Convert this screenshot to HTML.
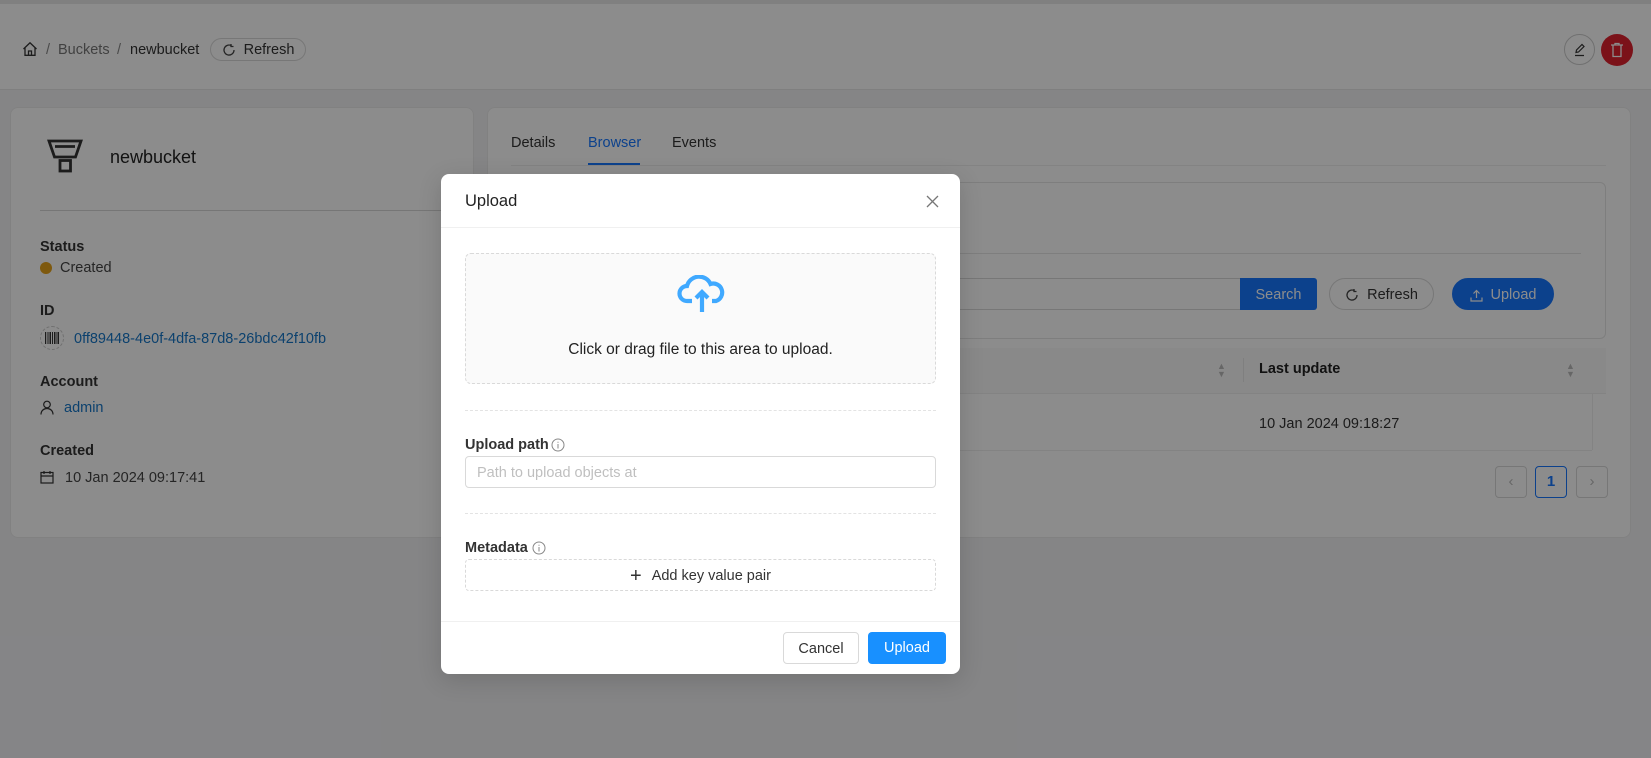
<!DOCTYPE html>
<html><head><meta charset="utf-8"><style>
*{box-sizing:border-box;margin:0;padding:0}
body{width:1651px;height:758px;overflow:hidden;background:#f2f3f5;font-family:"Liberation Sans",Arial,sans-serif;color:rgba(0,0,0,.88);position:relative;font-size:15px}
.abs{position:absolute}
.hdr{left:0;top:4px;width:1651px;height:86px;background:#fff;border-bottom:1px solid #e8e8e8}
.card{background:#fff;border-radius:8px;border:1px solid #ececec}
.lbl{font-weight:bold;font-size:14.5px;color:#333}
.val{font-size:14.5px;color:#444}
.link{color:#1677c8}
.btn{border:1px solid #d9d9d9;border-radius:16px;background:#fff;display:flex;align-items:center;justify-content:center;gap:8px;font-size:14.5px;color:#333}
.mask{left:0;top:0;width:1651px;height:758px;background:rgba(0,0,0,.45)}
.modal{left:441px;top:174px;width:519px;height:500px;background:#fff;border-radius:8px;box-shadow:0 6px 24px rgba(0,0,0,.15)}
.dash{border-top:1px dashed #e3e3e3}
</style></head><body>
<div class="abs" style="left:0;top:0;width:1651px;height:4px;background:#e9e9e9"></div>
<div class="abs hdr"></div>
<svg class="abs" style="left:22px;top:41px" width="16" height="16" viewBox="0 0 16 16" fill="none" stroke="#333" stroke-width="1.3"><path d="M1.5 8L8 1.8 14.5 8M3 6.5V14.3H13V6.5M6.5 14.3V10H9.5V14.3"/></svg>
<div class="abs val" style="left:46px;top:42px;color:#888">/</div>
<div class="abs val" style="left:58px;top:42px;color:#777">Buckets</div>
<div class="abs val" style="left:117px;top:42px;color:#888">/</div>
<div class="abs val" style="left:130px;top:42px;color:#333">newbucket</div>
<div class="abs btn" style="left:210px;top:38px;width:96px;height:23px;border-radius:12px"><svg width="14" height="14" viewBox="0 0 14 14" fill="none" stroke="#444" stroke-width="1.3"><path d="M12 7A5 5 0 1 1 9.5 2.7"/><path d="M9 1v2.5h2.5"/></svg>Refresh</div>
<div class="abs" style="left:1564px;top:34px;width:31px;height:31px;border:1px solid #ccc;border-radius:50%;background:#fff"></div>
<svg class="abs" style="left:1572px;top:42px" width="15" height="15" viewBox="0 0 15 15" fill="none" stroke="#333" stroke-width="1.2"><path d="M4 10.5L4.5 8 10 2.5 12 4.5 6.5 10Z M3 13.5H12"/></svg>
<div class="abs" style="left:1601px;top:34px;width:32px;height:32px;border-radius:50%;background:#e0212e"></div>
<svg class="abs" style="left:1610px;top:42px" width="14" height="16" viewBox="0 0 14 16" fill="none" stroke="#fff" stroke-width="1.3"><path d="M1 3H13M5 3V1.5H9V3M3 3V14.5H11V3"/></svg>

<div class="abs card" style="left:10px;top:107px;width:464px;height:431px"></div>
<svg class="abs" style="left:47px;top:139px" width="36" height="34" viewBox="0 0 36 34" fill="none" stroke="#333" stroke-width="2.8"><path d="M2 2H34L28.5 18H7.5Z M8 7.5H28"/><rect x="13" y="21.5" width="10.5" height="10.5"/></svg>
<div class="abs" style="left:110px;top:147px;font-size:18px;color:#222">newbucket</div>
<div class="abs" style="left:40px;top:210px;width:434px;border-top:1px solid #d8d8d8"></div>
<div class="abs lbl" style="left:40px;top:239px">Status</div>
<div class="abs" style="left:40px;top:262px;width:12px;height:12px;border-radius:50%;background:#e6a21a"></div>
<div class="abs val" style="left:60px;top:260px">Created</div>
<div class="abs lbl" style="left:40px;top:303px">ID</div>
<div class="abs" style="left:40px;top:326px;width:24px;height:24px;border:1px dashed #ccc;border-radius:50%"></div>
<svg class="abs" style="left:45px;top:332px" width="14" height="12"><g fill="#333"><rect x="0" width="1.2" height="12"/><rect x="2.5" width="1" height="12"/><rect x="4.5" width="1.5" height="12"/><rect x="7" width="1" height="12"/><rect x="9" width="1.5" height="12"/><rect x="11.5" width="1" height="12"/><rect x="13" width="1" height="12"/></g></svg>
<div class="abs val link" style="left:74px;top:331px">0ff89448-4e0f-4dfa-87d8-26bdc42f10fb</div>
<div class="abs lbl" style="left:40px;top:374px">Account</div>
<svg class="abs" style="left:40px;top:400px" width="14" height="15" viewBox="0 0 14 15" fill="none" stroke="#333" stroke-width="1.2"><circle cx="7" cy="4.5" r="3.3"/><path d="M1 14.5C1 10.5 4 8.5 7 8.5S13 10.5 13 14.5"/></svg>
<div class="abs val link" style="left:64px;top:400px">admin</div>
<div class="abs lbl" style="left:40px;top:443px">Created</div>
<svg class="abs" style="left:40px;top:470px" width="14" height="14" viewBox="0 0 14 14" fill="none" stroke="#333" stroke-width="1.2"><rect x="1" y="2.5" width="12" height="10.5"/><path d="M1 6H13M4 1V4M10 1V4"/></svg>
<div class="abs val" style="left:65px;top:470px">10 Jan 2024 09:17:41</div>

<div class="abs card" style="left:487px;top:107px;width:1144px;height:431px"></div>
<div class="abs val" style="left:511px;top:135px;color:#333">Details</div>
<div class="abs val" style="left:588px;top:135px;color:#1677ff">Browser</div>
<div class="abs val" style="left:672px;top:135px;color:#333">Events</div>
<div class="abs" style="left:511px;top:165px;width:1095px;border-top:1px solid #eee"></div>
<div class="abs" style="left:588px;top:163px;width:52px;height:2px;background:#1677ff"></div>
<div class="abs" style="left:511px;top:182px;width:1095px;height:157px;border:1px solid #e6e6e6;border-radius:6px"></div>
<div class="abs" style="left:520px;top:253px;width:1061px;border-top:1px solid #e6e6e6"></div>
<div class="abs" style="left:900px;top:278px;width:345px;height:32px;border:1px solid #d9d9d9"></div>
<div class="abs" style="left:1240px;top:278px;width:77px;height:32px;background:#1677ff;color:#fff;display:flex;align-items:center;justify-content:center;font-size:14.5px;border-radius:0 3px 3px 0;padding-top:2px">Search</div>
<div class="abs btn" style="left:1329px;top:278px;width:105px;height:32px;padding-top:2px"><svg width="14" height="14" viewBox="0 0 14 14" fill="none" stroke="#444" stroke-width="1.3"><path d="M12 7A5 5 0 1 1 9.5 2.7"/><path d="M9 1v2.5h2.5"/></svg>Refresh</div>
<div class="abs btn" style="left:1452px;top:278px;width:102px;height:32px;background:#1677ff;border-color:#1677ff;color:#fff;padding-top:2px"><svg width="13" height="13" viewBox="0 0 13 13" fill="none" stroke="#fff" stroke-width="1.2"><path d="M6.5 9V1.5M3.5 4.5L6.5 1.5 9.5 4.5M1 8.5V12H12V8.5"/></svg>Upload</div>
<div class="abs" style="left:511px;top:348px;width:1095px;height:46px;background:#fafafa;border-bottom:1px solid #eee"></div>
<div class="abs" style="left:1243px;top:358px;height:24px;border-left:1px solid #e8e8e8"></div>
<div class="abs" style="left:1259px;top:361px;font-weight:bold;font-size:14.5px;color:#222">Last update</div>
<div class="abs" style="left:1217px;top:362px;color:#bbb;font-size:9px;line-height:8px">▲<br>▼</div>
<div class="abs" style="left:1566px;top:362px;color:#bbb;font-size:9px;line-height:8px">▲<br>▼</div>
<div class="abs val" style="left:1259px;top:416px;color:#333">10 Jan 2024 09:18:27</div>
<div class="abs" style="left:511px;top:450px;width:1081px;border-top:1px solid #eee"></div>
<div class="abs" style="left:1592px;top:394px;height:56px;border-left:1px solid #eee"></div>
<div class="abs" style="left:1495px;top:466px;width:32px;height:32px;border:1px solid #d9d9d9;border-radius:4px;color:#bbb;text-align:center;line-height:30px">‹</div>
<div class="abs" style="left:1535px;top:466px;width:32px;height:32px;border:1px solid #1677ff;border-radius:4px;color:#1677ff;text-align:center;line-height:30px;font-weight:bold">1</div>
<div class="abs" style="left:1576px;top:466px;width:32px;height:32px;border:1px solid #d9d9d9;border-radius:4px;color:#bbb;text-align:center;line-height:30px">›</div>

<div class="abs mask"></div>
<div class="abs modal">
 <div class="abs" style="left:24px;top:18px;font-size:16.5px;color:#222">Upload</div>
 <svg class="abs" style="left:485px;top:21px" width="13" height="13" viewBox="0 0 13 13" stroke="#777" stroke-width="1.3"><path d="M1 1L12 12M12 1L1 12"/></svg>
 <div class="abs" style="left:0;top:53px;width:519px;border-top:1px solid #f0f0f0"></div>
 <div class="abs" style="left:24px;top:79px;width:471px;height:131px;background:#fafafa;border:1px dashed #d9d9d9;border-radius:6px"></div>
 <svg class="abs" style="left:236px;top:101px" width="50" height="39" viewBox="0 0 50 39" fill="none" stroke="#40a9ff" stroke-width="4.2"><path d="M15 26H10A7.5 7.5 0 0 1 10 11A12.5 12.5 0 0 1 33.5 9A8.5 8.5 0 0 1 39 26H35"/><path d="M25 37V17M19 23L25 17 31 23"/></svg>
 <div class="abs" style="left:0;width:519px;top:167px;text-align:center;font-size:15.5px;color:#222">Click or drag file to this area to upload.</div>
 <div class="abs dash" style="left:24px;top:236px;width:471px"></div>
 <div class="abs lbl" style="left:24px;top:263px">Upload path</div>
 <svg class="abs" style="left:110px;top:264px" width="14" height="14" viewBox="0 0 14 14" fill="none" stroke="#888"><circle cx="7" cy="7" r="6"/><path d="M7 6V10.5M7 3.8V4.8"/></svg>
 <div class="abs" style="left:24px;top:282px;width:471px;height:32px;border:1px solid #d9d9d9;border-radius:4px;padding-left:11px;line-height:32px;font-size:14.5px;color:#bfbfbf">Path to upload objects at</div>
 <div class="abs dash" style="left:24px;top:339px;width:471px"></div>
 <div class="abs lbl" style="left:24px;top:366px">Metadata</div>
 <svg class="abs" style="left:91px;top:367px" width="14" height="14" viewBox="0 0 14 14" fill="none" stroke="#888"><circle cx="7" cy="7" r="6"/><path d="M7 6V10.5M7 3.8V4.8"/></svg>
 <div class="abs" style="left:24px;top:385px;width:471px;height:32px;border:1px dashed #d9d9d9;border-radius:4px;display:flex;align-items:center;justify-content:center;gap:10px;font-size:14.5px;color:#333;padding-top:2px"><span style="font-size:20px;line-height:20px">+</span>Add key value pair</div>
 <div class="abs" style="left:0;top:447px;width:519px;border-top:1px solid #f0f0f0"></div>
 <div class="abs" style="left:342px;top:458px;width:76px;height:32px;border:1px solid #d9d9d9;border-radius:4px;text-align:center;line-height:32px;font-size:14.5px;color:#333">Cancel</div>
 <div class="abs" style="left:427px;top:458px;width:78px;height:32px;background:#1890ff;border-radius:4px;text-align:center;line-height:33px;font-size:14.5px;color:#fff">Upload</div>
</div>
</body></html>
